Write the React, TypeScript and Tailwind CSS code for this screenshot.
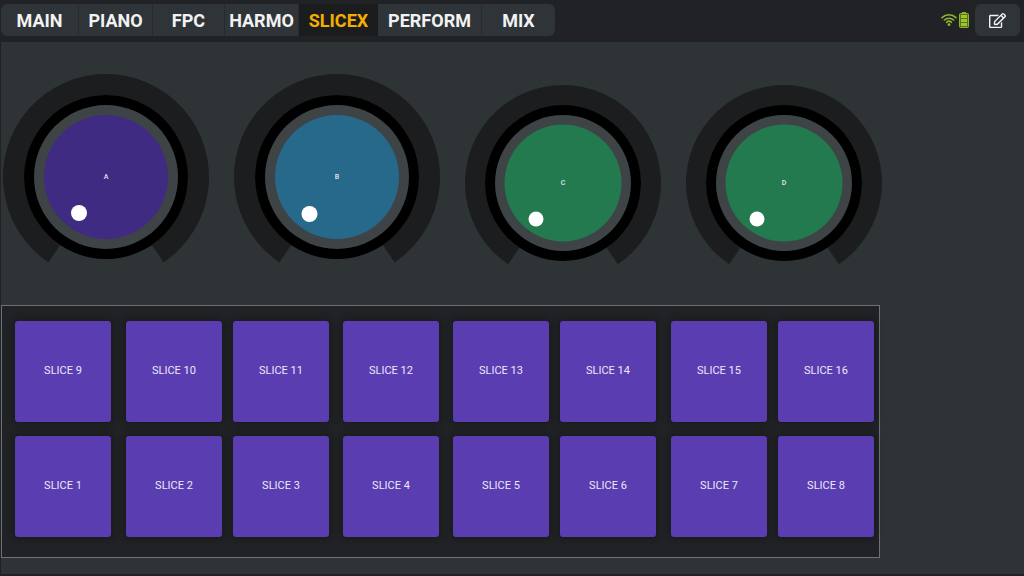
import React from "react";
import { FaRegEdit } from "react-icons/fa";

const tabs = [
  { t: "MAIN", w: "w-[78px]", b: true },
  { t: "PIANO", w: "w-[74px]", b: true },
  { t: "FPC", w: "w-[72px]", b: true },
  { t: "HARMO", w: "w-[74px]", b: true },
  { t: "SLICEX", w: "w-[79px]", a: true },
  { t: "PERFORM", w: "w-[104px]", b: true },
  { t: "MIX", w: "w-[73px]" },
];

function polar(cx: number, cy: number, r: number, deg: number) {
  const a = (deg * Math.PI) / 180;
  return `${(cx + r * Math.sin(a)).toFixed(2)} ${(cy - r * Math.cos(a)).toFixed(2)}`;
}

function Knob({ size, r, color, label, wrap, dot, labelOffset }: { size: number; r: number[]; color: string; label: string; wrap: string; dot: number[]; labelOffset: string }) {
  const c = size / 2;
  const sweep = 146;
  const rIn = r[1];
  const arc = `M ${polar(c, c, r[0], -sweep)} A ${r[0]} ${r[0]} 0 1 1 ${polar(c, c, r[0], sweep)} L ${polar(c, c, rIn, sweep)} A ${rIn} ${rIn} 0 1 0 ${polar(c, c, rIn, -sweep)} Z`;
  return (
    <div className={`relative shrink-0 ${wrap}`}>
      <svg width={size} height={size} viewBox={`0 0 ${size} ${size}`} className="block">
        <path d={arc} fill="#1c1d1f" />
        <circle cx={c} cy={c} r={r[1]} fill="#000" />
        <circle cx={c} cy={c} r={r[2]} fill="#3e4346" />
        <circle cx={c} cy={c} r={r[3]} fill={color} />
        <circle cx={dot[0]} cy={dot[1]} r={dot[2]} fill="#fff" />
      </svg>
      <span className={`absolute left-0 right-0 text-center text-[7px] leading-[8px] font-medium text-[#e4e4ee] ${labelOffset}`}>{label}</span>
    </div>
  );
}

const pads = [
  ["SLICE 9", "ml-0"], ["SLICE 10", "ml-[15px]"], ["SLICE 11", "ml-[11px]"], ["SLICE 12", "ml-[14px]"],
  ["SLICE 13", "ml-[14px]"], ["SLICE 14", "ml-[11px]"], ["SLICE 15", "ml-[15px]"], ["SLICE 16", "ml-[11px]"],
];
const pads2 = ["SLICE 1", "SLICE 2", "SLICE 3", "SLICE 4", "SLICE 5", "SLICE 6", "SLICE 7", "SLICE 8"];

function Pad({ t, ml }: { t: string; ml: string }) {
  return (
    <div className={`${ml} w-[96px] h-[101px] shrink-0 rounded-[3px] bg-[#5a3db1] shadow-[0_0_6px_2px_rgba(0,0,0,0.25)] flex items-center justify-center text-[11px] text-[#ece8f8]`}>
      {t}
    </div>
  );
}

export default function App() {
  return (
    <div className="w-[1024px] h-[576px] overflow-hidden bg-[#202225] flex flex-col font-['Roboto',sans-serif]">
      <div className="h-[42px] shrink-0 flex items-start pt-[4px] pl-px">
        <div className="flex h-[32px] w-[554px] rounded-[6px] overflow-hidden bg-[#2e3437]">
          {tabs.map((x) => (
            <div
              key={x.t}
              className={`${x.w} h-full flex items-center justify-center text-[18px] font-bold whitespace-nowrap ${x.a ? "bg-[#1b1c1e] text-[#f5ae00]" : "text-[#f2f2f2]"} ${x.b ? "border-r border-[#262b2d]" : ""}`}
            >
              {x.t}
            </div>
          ))}
        </div>
        <div className="ml-auto flex items-center h-[32px]">
          <svg width="16" height="14" viewBox="0 0 16 14" className="mr-[2px]">
            <g fill="none" stroke="#8db52a" strokeWidth="1.6" strokeLinecap="round">
              <path d="M1 4.6C5 .8 11 .8 15 4.6" />
              <path d="M3.4 7C6 4.6 10 4.6 12.6 7" />
              <path d="M5.6 9.3C7 8 9 8 10.4 9.3" />
            </g>
            <circle cx="8" cy="11.7" r="1.4" fill="#8db52a" />
          </svg>
          <svg width="10" height="16" viewBox="0 0 10 16" className="mr-[6px]">
            <rect x="3" y="0" width="4" height="2" fill="#8db52a" />
            <rect x="0.5" y="1.5" width="9" height="14" rx="1" fill="#5a7320" stroke="#8db52a" />
            <rect x="2" y="3" width="6" height="3" fill="#9cc52d" />
            <rect x="2" y="7" width="6" height="3" fill="#9cc52d" />
            <rect x="2" y="11" width="6" height="3" fill="#9cc52d" />
          </svg>
          <div className="w-[45px] h-[32px] mr-[4px] rounded-[6px] bg-[#2e3437] flex items-center justify-center text-[#f2f2f2]">
            <FaRegEdit size={17} />
          </div>
        </div>
      </div>
      <div className="ml-px h-[532px] bg-[#2e3436] flex flex-col">
        <div className="h-[263px] shrink-0 flex items-start">
          <Knob size={206} r={[103, 82, 72, 62]} color="#402b82" label="A" wrap="ml-[2px] mt-[32px]" dot={[76, 139, 8]} labelOffset="top-[99px]" />
          <Knob size={206} r={[103, 82, 72, 62]} color="#27698a" label="B" wrap="ml-[25px] mt-[32px]" dot={[75.5, 140, 8]} labelOffset="top-[99px]" />
          <Knob size={196} r={[98, 78, 68, 58.5]} color="#237a4e" label="C" wrap="ml-[25px] mt-[43px]" dot={[71, 134, 7.5]} labelOffset="top-[94px]" />
          <Knob size={196} r={[98, 78, 68, 58.5]} color="#237a4e" label="D" wrap="ml-[25px] mt-[43px]" dot={[71, 134, 7.5]} labelOffset="top-[94px]" />
        </div>
        <div className="w-[879px] h-[253px] border border-[#6e7173] bg-[#212225] pl-[13px] pt-[15px] flex flex-col gap-[14px]">
          <div className="flex">
            {pads.map(([t, ml]) => <Pad key={t} t={t} ml={ml} />)}
          </div>
          <div className="flex">
            {pads2.map((t, i) => <Pad key={t} t={t} ml={pads[i][1]} />)}
          </div>
        </div>
      </div>
    </div>
  );
}
